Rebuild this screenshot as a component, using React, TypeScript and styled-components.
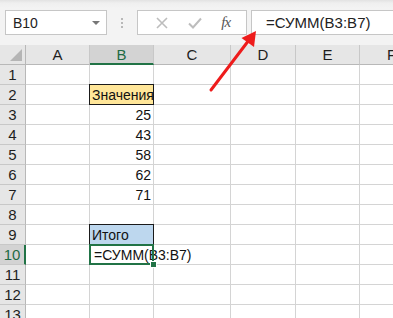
import React, { FC } from 'react'
import styled, { createGlobalStyle, css } from 'styled-components'

const GlobalStyle = createGlobalStyle`
    html, body {
        margin: 0;
        padding: 0;
        background: #ffffff;
    }
    body {
        font-family: "Liberation Sans", Arial, sans-serif;
        overflow: hidden;
    }
`

const Page = styled.div`
    position: relative;
    width: 393px;
    height: 318px;
    overflow: hidden;
    background: #ffffff;
`

const Toolbar = styled.div`
    display: flex;
    align-items: flex-start;
    height: 45px;
    box-sizing: border-box;
    padding: 10px 0 0 5px;
    background: linear-gradient(#e2e2e2 0, #efefef 3px, #f3f3f3 8px);
`

const Box = styled.div`
    height: 25px;
    box-sizing: border-box;
    background: #ffffff;
    border: 1px solid #c6c6c6;
    display: flex;
    align-items: center;
`

const NameBox = styled(Box)`
    width: 102px;
    padding: 0 6px 0 7px;
    justify-content: space-between;
    font-size: 14px;
    color: #222;
`

const DropArrow = styled.span`
    width: 0;
    height: 0;
    border-left: 4px solid transparent;
    border-right: 4px solid transparent;
    border-top: 4px solid #777;
    margin-top: 1px;
`

const Grip = styled.div`
    width: 30px;
    height: 25px;
    display: flex;
    flex-direction: column;
    align-items: center;
    justify-content: center;
    gap: 2px;

    span {
        width: 2px;
        height: 2px;
        background: #b8b8b8;
    }
`

const Buttons = styled(Box)`
    width: 110px;
    justify-content: space-around;
    padding: 0 6px 0 8px;
`

const FxLabel = styled.span`
    font-family: "Liberation Serif", "Times New Roman", serif;
    font-style: italic;
    font-size: 15px;
    color: #555;
    letter-spacing: -1px;
`

const FormulaInput = styled(Box)`
    flex: 1;
    margin-left: 4px;
    border-right: none;
    padding-left: 14px;
    font-size: 15px;
    color: #222;
`

const Sheet = styled.div`
    display: grid;
    grid-template-columns: 26px 64px 64px 77px 65px 64px 64px;
    grid-auto-rows: 20px;
    font-size: 14px;
    color: #111;
`

const Header = styled.div<{ selected?: boolean }>`
    position: relative;
    box-sizing: border-box;
    background: #e6e6e6;
    border-right: 1px solid #c8c8c8;
    border-bottom: 1px solid #b8b8b8;
    display: flex;
    align-items: center;
    justify-content: center;
    font-size: 15px;
    color: #1e1e1e;
    ${({ selected }) => selected && css`
        background: #d3d3d3;
        color: #1f6b44;
        border-bottom: 2px solid #217346;
    `}
`

const RowHeader = styled.div<{ selected?: boolean }>`
    box-sizing: border-box;
    background: #e6e6e6;
    border-right: 1px solid #b8b8b8;
    border-bottom: 1px solid #c8c8c8;
    display: flex;
    align-items: center;
    justify-content: center;
    font-size: 15px;
    color: #1e1e1e;
    ${({ selected }) => selected && css`
        background: #d3d3d3;
        color: #1f6b44;
        border-right: 2px solid #217346;
    `}
`

const Corner = styled(Header)`
    border-right-color: #b8b8b8;

    &::after {
        content: '';
        position: absolute;
        right: 3px;
        bottom: 3px;
        width: 0;
        height: 0;
        border-left: 12px solid transparent;
        border-bottom: 12px solid #b5b5b5;
    }
`

type CellKind = 'plain' | 'label' | 'total' | 'active'

const Cell = styled.div<{ kind?: CellKind; align?: 'left' | 'right' }>`
    position: relative;
    box-sizing: border-box;
    border-right: 1px solid #d4d4d4;
    border-bottom: 1px solid #d4d4d4;
    display: flex;
    align-items: center;
    justify-content: ${({ align }) => align == 'right' ? 'flex-end' : 'flex-start'};
    padding: 0 2px 0 2px;
    white-space: nowrap;
    line-height: 1;
    ${({ kind }) => kind == 'label' && css`background: #ffe699;`}
    ${({ kind }) => kind == 'total' && css`background: #bdd7ee;`}
    ${({ kind }) => (kind == 'label' || kind == 'total') && css`
        &::after {
            content: '';
            position: absolute;
            left: -1px;
            top: -1px;
            right: -1px;
            bottom: -1px;
            border: 1px solid #1a1a1a;
        }
    `}
    ${({ kind }) => kind == 'active' && css`
        padding-left: 4px;
        overflow: visible;
        border-right-color: transparent;
        &::after {
            content: '';
            position: absolute;
            left: -1px;
            top: -1px;
            right: -1px;
            bottom: -1px;
            border: 2px solid #217346;
            z-index: 2;
        }
        &::before {
            content: '';
            position: absolute;
            right: -4px;
            bottom: -4px;
            width: 5px;
            height: 5px;
            background: #217346;
            border: 1px solid #ffffff;
            z-index: 3;
        }
    `}
`

const Arrow = styled.svg`
    position: absolute;
    left: 0;
    top: 0;
    pointer-events: none;
    z-index: 5;
`

const columns = ['A', 'B', 'C', 'D', 'E', 'F']

const values: Record<number, { text: string; kind?: CellKind; align?: 'left' | 'right' }> = {
    2: { text: 'Значения', kind: 'label' },
    3: { text: '25', align: 'right' },
    4: { text: '43', align: 'right' },
    5: { text: '58', align: 'right' },
    6: { text: '62', align: 'right' },
    7: { text: '71', align: 'right' },
    9: { text: 'Итого', kind: 'total' },
    10: { text: '=СУММ(B3:B7)', kind: 'active' },
}

const App: FC = () => {
    const rows = Array.from({ length: 13 }, (_, i) => i + 1)
    return (
        <Page>
            <GlobalStyle />
            <Toolbar>
                <NameBox>
                    <span>B10</span>
                    <DropArrow />
                </NameBox>
                <Grip>
                    <span /><span /><span />
                </Grip>
                <Buttons>
                    <svg width="12" height="12" viewBox="0 0 12 12">
                        <path d="M1 1 L11 11 M11 1 L1 11" stroke="#bdbdbd" strokeWidth="1.6" fill="none" />
                    </svg>
                    <svg width="14" height="12" viewBox="0 0 14 12">
                        <path d="M1 6.5 L5 10.5 L13 1.5" stroke="#bdbdbd" strokeWidth="2" fill="none" />
                    </svg>
                    <FxLabel>fx</FxLabel>
                </Buttons>
                <FormulaInput>=СУММ(B3:B7)</FormulaInput>
            </Toolbar>
            <Sheet>
                <Corner />
                {columns.map(c => (
                    <Header key={c} selected={c == 'B'}>{c}</Header>
                ))}
                {rows.map(r => (
                    <React.Fragment key={r}>
                        <RowHeader selected={r == 10}>{r}</RowHeader>
                        {columns.map(c => {
                            const v = c == 'B' ? values[r] : undefined
                            return (
                                <Cell key={c} kind={v?.kind} align={v?.align}>
                                    {v?.text}
                                </Cell>
                            )
                        })}
                    </React.Fragment>
                ))}
            </Sheet>
            <Arrow width="393" height="318" viewBox="0 0 393 318">
                <line x1="211" y1="90" x2="249" y2="40" stroke="#ee1c1c" strokeWidth="3" strokeLinecap="round" />
                <polygon points="256,31 254,47 241.5,38" fill="#ee1c1c" />
            </Arrow>
        </Page>
    )
}

export default App
